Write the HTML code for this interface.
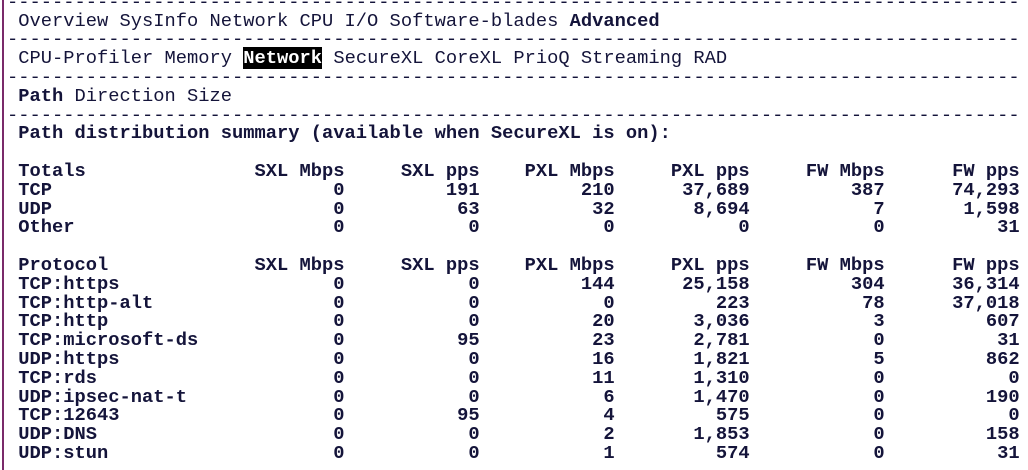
<!DOCTYPE html>
<html><head><meta charset="utf-8"><style>
html,body{margin:0;padding:0;background:#fff;width:1028px;height:470px;overflow:hidden}
.bar{position:absolute;left:2px;top:0;width:2px;height:470px;background:#7a2a6a}
pre{position:absolute;left:7px;top:-7.2px;margin:0;font-family:"Liberation Mono",monospace;font-size:18.75px;line-height:18.8px;color:#14143a}
b{font-weight:bold}
.hl{background:#000;color:#fff;font-weight:bold}
</style></head><body>
<div class="bar"></div>
<pre>------------------------------------------------------------------------------------------
 Overview SysInfo Network CPU I/O Software-blades <b>Advanced</b>
------------------------------------------------------------------------------------------
 CPU-Profiler Memory <span class="hl">Network</span> SecureXL CoreXL PrioQ Streaming RAD
------------------------------------------------------------------------------------------
 <b>Path</b> Direction Size
------------------------------------------------------------------------------------------
<b> Path distribution summary (available when SecureXL is on):

 Totals               SXL Mbps     SXL pps    PXL Mbps     PXL pps     FW Mbps      FW pps
 TCP                         0         191         210      37,689         387      74,293
 UDP                         0          63          32       8,694           7       1,598
 Other                       0           0           0           0           0          31

 Protocol             SXL Mbps     SXL pps    PXL Mbps     PXL pps     FW Mbps      FW pps
 TCP:https                   0           0         144      25,158         304      36,314
 TCP:http-alt                0           0           0         223          78      37,018
 TCP:http                    0           0          20       3,036           3         607
 TCP:microsoft-ds            0          95          23       2,781           0          31
 UDP:https                   0           0          16       1,821           5         862
 TCP:rds                     0           0          11       1,310           0           0
 UDP:ipsec-nat-t             0           0           6       1,470           0         190
 TCP:12643                   0          95           4         575           0           0
 UDP:DNS                     0           0           2       1,853           0         158
 UDP:stun                    0           0           1         574           0          31</b></pre>
</body></html>
